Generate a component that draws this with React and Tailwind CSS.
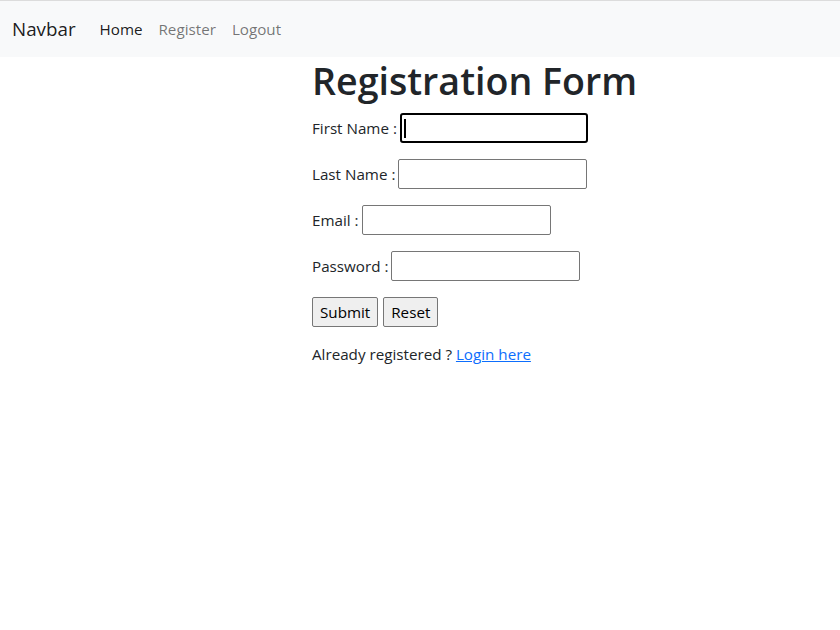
import { useState } from "react";

const font = { fontFamily: '"Open Sans", "Noto Sans", "Liberation Sans", sans-serif' };

function Field({ label, focused }) {
   return (
      <div className="mb-4 flex h-[30px] items-center whitespace-nowrap">
         <label className="mr-[3px] shrink-0">{label} :</label>
         <div className="relative shrink-0">
            <input
               type="text"
               className={
                  focused
                     ? "block h-[30px] w-[188px] rounded-[3px] border-2 border-black bg-white px-[2px] outline-none"
                     : "block h-[30px] w-[189px] rounded-[2px] border border-[#767676] bg-white px-[2px] outline-none"
               }
            />
            {focused && <span className="absolute left-[4px] top-[6px] h-[19px] w-[2px] bg-black"></span>}
         </div>
      </div>
   );
}

export default function App() {
   const [form] = useState(["First Name", "Last Name", "Email", "Password"]);

   return (
      <div className="min-h-[630px] bg-white text-[15.2px] leading-[1.5] text-[#212529]" style={font}>
         <nav className="flex h-[57px] items-center border-t border-[#dcdcdc] bg-[#f8f9fa] px-3">
            <span className="mr-4 text-[18.8px] leading-[30px] text-black/90">Navbar</span>
            <ul className="flex">
               <li className="px-2 text-black/90">Home</li>
               <li className="px-2 text-black/55">Register</li>
               <li className="px-2 text-black/55">Logout</li>
            </ul>
         </nav>

         <div className="mx-auto grid w-[720px] grid-cols-3">
            <div></div>
            <div className="px-3">
               <h1 className="mb-2 h-[48px] whitespace-nowrap text-[37.6px] font-semibold leading-[48px]">
                  Registration Form
               </h1>
               {form.map((label, i) => (
                  <Field key={label} label={label} focused={i === 0} />
               ))}
               <div className="mb-4 flex gap-[5px]">
                  <button className="h-[30px] rounded-[2px] border border-[#767676] bg-[#efefef] px-[7px] text-black">
                     Submit
                  </button>
                  <button className="h-[30px] rounded-[2px] border border-[#767676] bg-[#efefef] px-[7px] text-black">
                     Reset
                  </button>
               </div>
               <p className="mt-[1px] whitespace-nowrap">
                  Already registered ?{" "}
                  <a href="#" className="text-[#0d6efd] underline">
                     Login here
                  </a>
               </p>
            </div>
            <div></div>
         </div>
      </div>
   );
}
